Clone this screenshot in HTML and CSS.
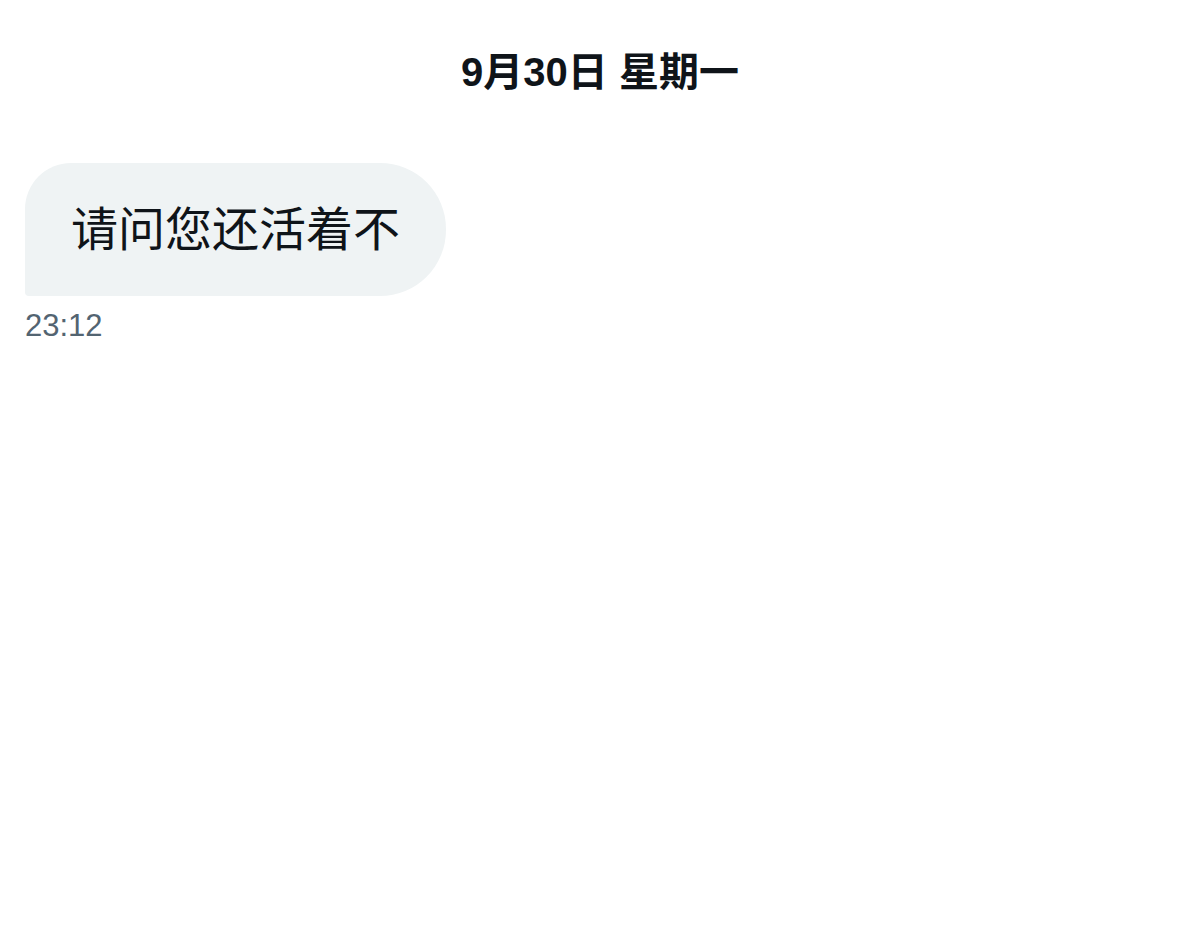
FILE: index.html
```html
<!DOCTYPE html>
<html lang="zh-CN">
<head>
    <meta charset="UTF-8">
    <meta name="viewport" content="width=device-width, initial-scale=1.0">
    <title>私信</title>
    <link rel="stylesheet" href="styles.css">
</head>
<body>
    <div class="conversation">
        <div class="day-divider">9月30日 星期一</div>

        <div class="message received">
            <div class="bubble">请问您还活着不</div>
            <div class="time">23:12</div>
        </div>
    </div>
</body>
</html>
```

FILE: styles.css
```css
body {
    margin: 0;
    background: #ffffff;
    color: #0f1419;
    font-family: "Liberation Sans", "Noto Sans CJK SC", sans-serif;
}
.conversation {
    padding: 46px 25px 0;
}
.day-divider {
    text-align: center;
    font-weight: bold;
    font-size: 40px;
    line-height: 52px;
}
.message {
    display: flex;
    flex-direction: column;
    align-items: flex-start;
    margin-top: 65px;
}
.bubble {
    background: #eff3f4;
    font-size: 47px;
    line-height: 60px;
    padding: 37px 46px 36px 46px;
    border-radius: 46px 66px 66px 4px;
}
.time {
    margin-top: 12px;
    font-size: 31px;
    line-height: 36px;
    color: #536471;
}
```
